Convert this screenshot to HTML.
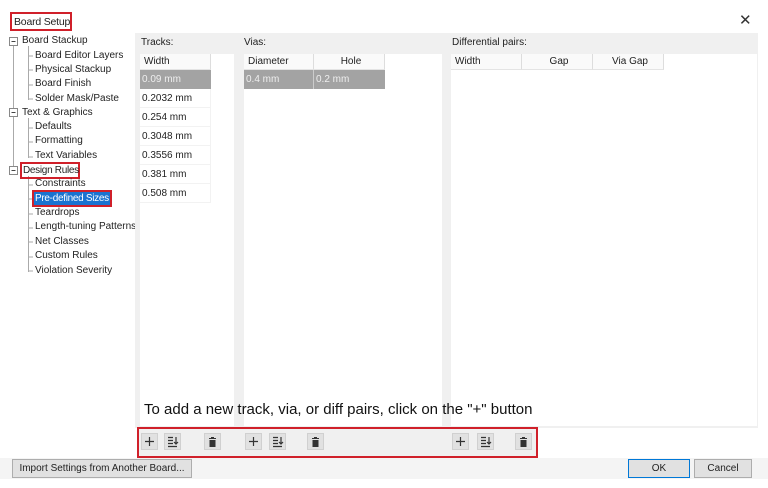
<!DOCTYPE html>
<html><head><meta charset="utf-8"><style>
*{margin:0;padding:0;box-sizing:border-box}
body{width:768px;height:488px;background:#fff;font-family:"Liberation Sans",sans-serif;font-size:10px;color:#222;position:relative;overflow:hidden}
.a{position:absolute;white-space:nowrap}
.panel{position:absolute;left:135px;top:33px;width:623px;height:395px;background:#f0f0f0}
.white{position:absolute;background:#fff}
.hdr{position:absolute;background:#fafafa;border-right:1px solid #ddd;border-bottom:1px solid #e4e4e4;height:16px;line-height:16px;padding-left:4px}
.sel{position:absolute;background:#a3a3a3;color:#eee;height:19px;line-height:19px;padding-left:2px}
.row{position:absolute;left:140px;width:71px;height:19px;line-height:19px;padding-left:2px;border-bottom:1px solid #f2f2f2;border-right:1px solid #f2f2f2}
.btn{position:absolute;top:433px;width:17px;height:17px;background:#e1e1e1;border:1px solid #d0d0d0}
.tree{position:absolute;left:22px;line-height:14.4px}
</style></head><body>
<div class="a" style="left:10px;top:12px;width:62px;height:19px;border:2px solid #d0202a;padding:2px 0 0 2px;font-size:10.5px;letter-spacing:-0.2px">Board Setup</div>
<div class="a" style="left:739px;top:11px;font-size:15px;color:#333">✕</div>

<svg class="a" style="left:8px;top:36px" width="40" height="240">
<g stroke="#aaa" fill="none" stroke-width="1">
<line x1="5.5" y1="5" x2="5.5" y2="138"/>
<line x1="20.5" y1="10" x2="20.5" y2="64"/>
<line x1="20.5" y1="82" x2="20.5" y2="122"/>
<line x1="20.5" y1="140" x2="20.5" y2="236"/>
<line x1="20.5" y1="20" x2="25" y2="20"/><line x1="20.5" y1="34" x2="25" y2="34"/><line x1="20.5" y1="49" x2="25" y2="49"/><line x1="20.5" y1="63" x2="25" y2="63"/>
<line x1="20.5" y1="92" x2="25" y2="92"/><line x1="20.5" y1="106" x2="25" y2="106"/><line x1="20.5" y1="121" x2="25" y2="121"/>
<line x1="20.5" y1="149" x2="25" y2="149"/><line x1="20.5" y1="163" x2="25" y2="163"/><line x1="20.5" y1="178" x2="25" y2="178"/><line x1="20.5" y1="192" x2="25" y2="192"/><line x1="20.5" y1="206" x2="25" y2="206"/><line x1="20.5" y1="221" x2="25" y2="221"/><line x1="20.5" y1="235" x2="25" y2="235"/>
</g>
<g fill="#fff" stroke="#888"><rect x="1.5" y="1.5" width="8" height="8"/><rect x="1.5" y="72.5" width="8" height="8"/><rect x="1.5" y="130.5" width="8" height="8"/></g>
<g stroke="#444"><line x1="3.5" y1="5.5" x2="7.5" y2="5.5"/><line x1="3.5" y1="76.5" x2="7.5" y2="76.5"/><line x1="3.5" y1="134.5" x2="7.5" y2="134.5"/></g>
</svg>
<div class="tree" style="top:34px">Board Stackup</div>
<div class="tree" style="top:48.5px;left:35px">Board Editor Layers<br>Physical Stackup<br>Board Finish<br>Solder Mask/Paste</div>
<div class="tree" style="top:106px">Text &amp; Graphics</div>
<div class="tree" style="top:120px;left:35px">Defaults<br>Formatting<br>Text Variables</div>
<div class="a" style="left:20px;top:162px;width:60px;border:2px solid #d0202a;padding:0 1px;line-height:13px;letter-spacing:-0.3px">Design Rules</div>
<div class="tree" style="top:177px;left:35px">Constraints</div>
<div class="a" style="left:32px;top:190px;width:80px;border:2px solid #d0202a;background:#1a73d0;color:#fff;padding:0 1px;line-height:13px;overflow:hidden;letter-spacing:-0.3px">Pre-defined Sizes</div>
<div class="tree" style="top:206px;left:35px">Teardrops<br>Length-tuning Patterns<br>Net Classes<br>Custom Rules<br>Violation Severity</div>

<div class="panel"></div>
<div class="a" style="left:141px;top:37px">Tracks:</div>
<div class="a" style="left:244px;top:37px">Vias:</div>
<div class="a" style="left:452px;top:37px">Differential pairs:</div>
<div class="white" style="left:140px;top:54px;width:94px;height:372px"></div>
<div class="white" style="left:244px;top:54px;width:198px;height:372px"></div>
<div class="white" style="left:451px;top:54px;width:306px;height:372px"></div>
<div class="hdr" style="left:140px;top:54px;width:71px">Width</div>
<div class="hdr" style="left:244px;top:54px;width:70px">Diameter</div>
<div class="hdr" style="left:314px;top:54px;width:71px;text-align:center">Hole</div>
<div class="hdr" style="left:451px;top:54px;width:71px">Width</div>
<div class="hdr" style="left:522px;top:54px;width:71px;text-align:center">Gap</div>
<div class="hdr" style="left:593px;top:54px;width:71px;text-align:center">Via Gap</div>
<div class="sel" style="left:140px;top:70px;width:71px">0.09 mm</div>
<div class="sel" style="left:244px;top:70px;width:70px;border-right:1px solid #ccc">0.4 mm</div>
<div class="sel" style="left:314px;top:70px;width:71px">0.2 mm</div>
<div class="row" style="top:89px">0.2032 mm</div>
<div class="row" style="top:108px">0.254 mm</div>
<div class="row" style="top:127px">0.3048 mm</div>
<div class="row" style="top:146px">0.3556 mm</div>
<div class="row" style="top:165px">0.381 mm</div>
<div class="row" style="top:184px">0.508 mm</div>

<div class="a" style="left:144px;top:401px;font-size:15px;color:#111">To add a new track, via, or diff pairs, click on the "+" button</div>
<div class="a" style="left:137px;top:427px;width:401px;height:31px;background:#f0f0f0;border:2px solid #d0202a"></div>
<div class="btn" style="left:141px"></div><div class="btn" style="left:164px"></div><div class="btn" style="left:204px"></div>
<div class="btn" style="left:245px"></div><div class="btn" style="left:269px"></div><div class="btn" style="left:307px"></div>
<div class="btn" style="left:452px"></div><div class="btn" style="left:477px"></div><div class="btn" style="left:515px"></div>
<svg class="a" style="left:0;top:0" width="768" height="488">
<g stroke="#333" stroke-width="1.2" fill="none">
<path d="M145 441.5h9M149.5 437v9M249 441.5h9M253.5 437v9M456 441.5h9M460.5 437v9"/>
<path d="M168 437.5h5M168 440.5h5M168 443.5h5M168 446.5h9M176 437v7M174 442l2 2 2-2"/>
<path d="M273 437.5h5M273 440.5h5M273 443.5h5M273 446.5h9M281 437v7M279 442l2 2 2-2"/>
<path d="M481 437.5h5M481 440.5h5M481 443.5h5M481 446.5h9M489 437v7M487 442l2 2 2-2"/>
</g>
<g fill="#333"><path d="M209 438h7v1h-7zM209.5 440h6v7h-6zM211 437h3v1h-3z"/><path d="M312 438h7v1h-7zM312.5 440h6v7h-6zM314 437h3v1h-3z"/><path d="M520 438h7v1h-7zM520.5 440h6v7h-6zM522 437h3v1h-3z"/></g>
</svg>

<div class="a" style="left:0;top:458px;width:768px;height:21px;background:#f4f4f4;z-index:-1"></div>
<div class="a" style="left:12px;top:459px;width:180px;height:19px;background:#e1e1e1;border:1px solid #adadad;line-height:17px;text-align:center">Import Settings from Another Board...</div>
<div class="a" style="left:628px;top:459px;width:62px;height:19px;background:#e1e1e1;border:1px solid #0078d7;line-height:17px;text-align:center">OK</div>
<div class="a" style="left:694px;top:459px;width:58px;height:19px;background:#e1e1e1;border:1px solid #adadad;line-height:17px;text-align:center">Cancel</div>
</body></html>
